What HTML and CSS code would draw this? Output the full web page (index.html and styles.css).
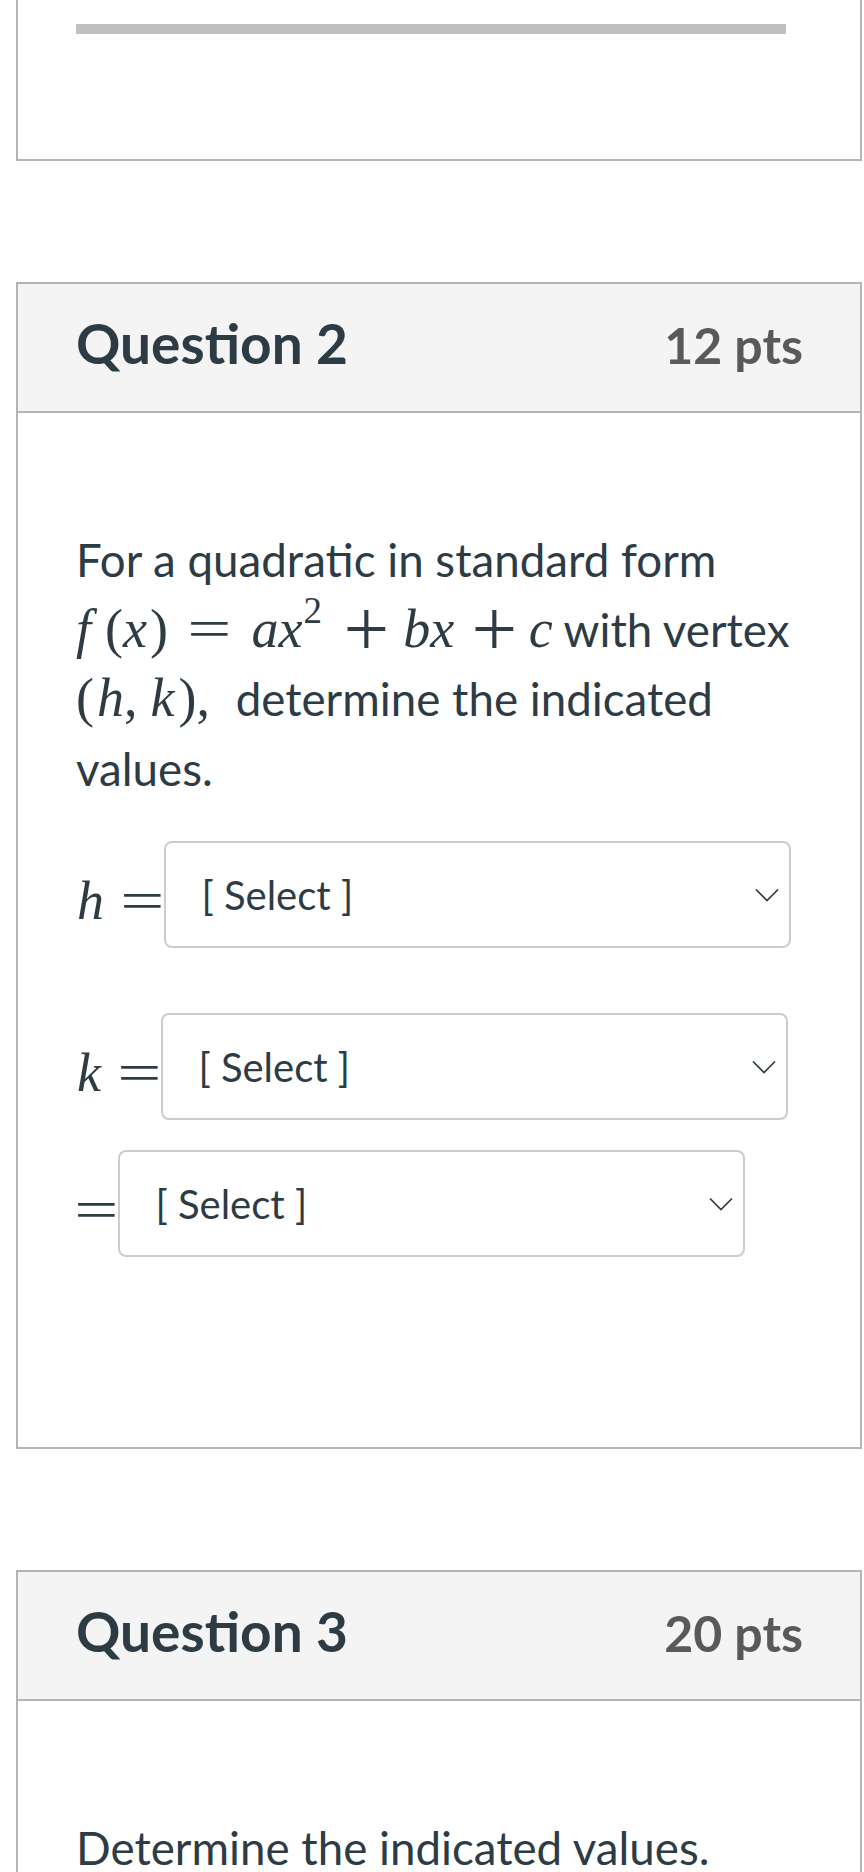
FILE: index.html
```html
<!DOCTYPE html>
<html lang="en">
<head>
<meta charset="utf-8">
<title>Quiz</title>
<link rel="stylesheet" href="styles.css">
</head>
<body>
<div class="card card-top">
  <div class="bar"></div>
</div>

<section class="card question">
  <header class="q-header">
    <h2 class="q-title">Question 2</h2>
    <span class="q-pts">12 pts</span>
  </header>
  <div class="q-body">
    <p class="q-text">For a quadratic in standard form <span class="math"><span class="mi f">f</span><span class="mo lp">(</span><span class="mi">x</span><span class="mo rp">)</span><span class="rel eq1">=</span><span class="mi">a</span><span class="mi">x</span><span class="sup">2</span><span class="bin b1">+</span><span class="mi">b</span><span class="mi">x</span><span class="bin b2">+</span><span class="mi c">c</span></span> with vertex <span class="math"><span class="mo">(</span><span class="mi h">h</span><span class="mo comma">,</span><span class="mi k">k</span><span class="mo">)</span><span class="mo end-comma">,</span></span> determine the indicated values.</p>

    <div class="answer-row row-h">
      <span class="answer-label"><span class="mi">h</span><span class="rel">=</span></span>
      <div class="select"><span class="select-text">[ Select ]</span><svg class="chev" width="24" height="14" viewBox="0 0 24 14"><polyline points="1,1.5 12,12.5 23,1.5" fill="none" stroke="#2d3b45" stroke-width="1.7"/></svg></div>
    </div>

    <div class="answer-row row-k">
      <span class="answer-label"><span class="mi">k</span><span class="rel">=</span></span>
      <div class="select"><span class="select-text">[ Select ]</span><svg class="chev" width="24" height="14" viewBox="0 0 24 14"><polyline points="1,1.5 12,12.5 23,1.5" fill="none" stroke="#2d3b45" stroke-width="1.7"/></svg></div>
    </div>

    <div class="answer-row row-eq">
      <span class="answer-label"><span class="rel rel-only">=</span></span>
      <div class="select"><span class="select-text">[ Select ]</span><svg class="chev" width="24" height="14" viewBox="0 0 24 14"><polyline points="1,1.5 12,12.5 23,1.5" fill="none" stroke="#2d3b45" stroke-width="1.7"/></svg></div>
    </div>
  </div>
</section>

<section class="card question">
  <header class="q-header">
    <h2 class="q-title">Question 3</h2>
    <span class="q-pts">20 pts</span>
  </header>
  <div class="q-body">
    <p class="q-text">Determine the indicated values.</p>
  </div>
</section>
</body>
</html>
```

FILE: styles.css
```css
html, body {
  margin: 0;
  padding: 0;
  background: #ffffff;
}

body {
  font-family: Lato, "Liberation Sans", sans-serif;
  color: #2d3b45;
  width: 864px;
  overflow: hidden;
}

.card {
  box-sizing: border-box;
  width: 846px;
  margin-left: 16px;
  border: 2px solid #b4b4b4;
  background: #ffffff;
}

.card-top {
  border-top: none;
  padding: 24px 0 125px 58px;
}

.bar {
  width: 710px;
  height: 10px;
  background: #c0c0c0;
}

.question {
  margin-top: 121px;
}

.q-header {
  display: flex;
  justify-content: space-between;
  align-items: baseline;
  background: #f4f4f4;
  border-bottom: 2px solid #b4b4b4;
  height: 95px;
  box-sizing: content-box;
  padding: 32px 57px 0 58px;
}

.q-title,
.q-pts {
  margin: 0;
  font-weight: 700;
}

.q-title {
  font-size: 55px;
  line-height: 55px;
  color: #2d3b45;
}

.q-pts {
  font-size: 50px;
  line-height: 50px;
  color: #595959;
}

.q-body {
  padding: 112px 58px 190px 58px;
}

.q-text {
  margin: 0;
  font-size: 45.7px;
  line-height: 69.6px;
  color: #2d3b45;
}

.math {
  font-family: "Liberation Serif", "DejaVu Serif", serif;
  font-size: 54px;
  line-height: 0;
  white-space: nowrap;
  color: #2d3b45;
}

.mi {
  font-style: italic;
}

.f {
  margin-right: 14px;
}

.mo {
  font-style: normal;
}

.rp {
  margin-left: 3px;
}

.h {
  margin-left: 3px;
}

.comma {
  margin-right: 13px;
}

.k {
  margin-right: 4px;
}

.end-comma {
  margin-right: 14px;
}

.rel {
  display: inline-block;
  transform: scaleX(1.45);
}

.eq1 {
  margin: 0 27px 0 26px;
}

.bin {
  display: inline-block;
  transform: scale(1.5);
}

.b1 {
  margin: 0 22px 0 29px;
}

.b2 {
  margin: 0 19px 0 25px;
}

.sup {
  font-size: 37px;
  vertical-align: 24px;
  line-height: 0;
  margin-left: 1px;
}

.answer-row {
  display: flex;
  align-items: flex-start;
}

.row-h {
  margin-top: 38px;
}

.row-k {
  margin-top: 65px;
}

.row-eq {
  margin-top: 30px;
}

.answer-label {
  font-family: "Liberation Serif", "DejaVu Serif", serif;
  font-size: 54px;
  line-height: 54px;
  margin-top: 33px;
  white-space: nowrap;
  color: #2d3b45;
  padding-left: 1px;
}

.answer-label .rel {
  margin: 0 7px 0 23px;
}

.answer-label .rel-only {
  margin: 0 7px 0 4px;
}

.select {
  box-sizing: border-box;
  width: 627px;
  height: 107px;
  border: 2px solid #c9cdd1;
  border-radius: 8px;
  background: #ffffff;
  display: flex;
  align-items: center;
  justify-content: space-between;
  padding: 0 10px 0 35px;
}

.select-text {
  font-size: 40px;
  color: #2d3b45;
}

.chev {
  display: block;
}
```
